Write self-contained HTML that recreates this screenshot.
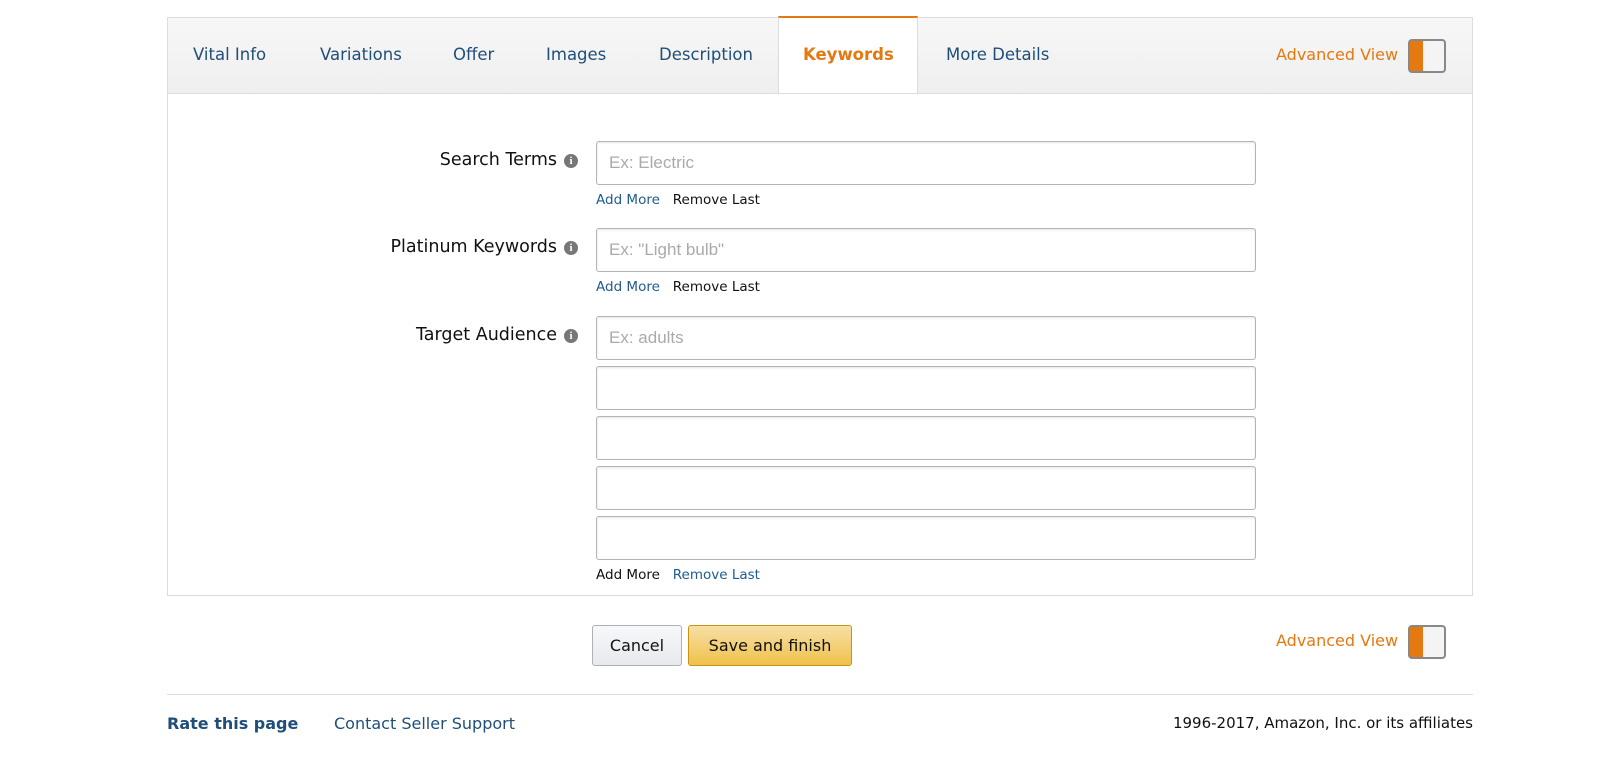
<!DOCTYPE html><html><head><style>
body{margin:0;background:#fff;font-family:"DejaVu Sans","Liberation Sans",sans-serif;color:#111;width:1612px;height:772px;position:relative;overflow:hidden}
.a{position:absolute}
.box{left:167px;top:17px;width:1304px;height:577px;border:1px solid #ddd}
.bar{left:168px;top:18px;width:1304px;height:75px;background:linear-gradient(#f7f7f7,#efefef);border-bottom:1px solid #ddd}
.tab{top:45px;font-size:16.5px;color:#1f4e79}
.kw{left:778px;top:16px;width:140px;height:77px;background:#fff;border-top:2px solid #e47911;border-left:1px solid #ddd;border-right:1px solid #ddd;box-sizing:border-box}
.lbl{font-size:17.5px;text-align:right;right:1034px}
.info{display:inline-block;width:14px;height:14px;border-radius:50%;background:#777;color:#fff;font-size:11px;line-height:14px;text-align:center;font-weight:bold;vertical-align:1px;margin-left:7px;font-family:"Liberation Serif",serif}
.in{left:596px;width:660px;height:44px;border:1px solid #b4b4b4;border-radius:3px;box-shadow:inset 0 1px 2px rgba(0,0,0,.1);box-sizing:border-box;font-family:"Liberation Sans",sans-serif;font-size:17px;color:#aaa;padding:11px 12px}
.sm{font-size:13.5px}
.blue{color:#1f5b8f}
.tog{width:38px;height:34px;border:2px solid #888;border-radius:4px;box-sizing:border-box;background:linear-gradient(90deg,#e47911 0 13px,#f4f4f4 13px)}
.av{font-size:16px;color:#e47911}
</style></head><body>
<div class="a box"></div>
<div class="a bar"></div>
<div class="a kw"></div>
<div class="a tab" style="left:193px">Vital Info</div>
<div class="a tab" style="left:320px">Variations</div>
<div class="a tab" style="left:453px">Offer</div>
<div class="a tab" style="left:546px">Images</div>
<div class="a tab" style="left:659px">Description</div>
<div class="a tab" style="left:803px;color:#e47911;font-weight:bold">Keywords</div>
<div class="a tab" style="left:946px">More Details</div>
<div class="a av" style="left:1276px;top:45px">Advanced View</div>
<div class="a tog" style="left:1408px;top:39px"></div>

<div class="a lbl" style="top:150px">Search Terms<span class="info">i</span></div>
<div class="a in" style="top:141px">Ex: Electric</div>
<div class="a sm" style="left:596px;top:192px"><span class="blue">Add More</span>&nbsp;&nbsp; Remove Last</div>
<div class="a lbl" style="top:237px">Platinum Keywords<span class="info">i</span></div>
<div class="a in" style="top:228px">Ex: "Light bulb"</div>
<div class="a sm" style="left:596px;top:279px"><span class="blue">Add More</span>&nbsp;&nbsp; Remove Last</div>
<div class="a lbl" style="top:325px">Target Audience<span class="info">i</span></div>
<div class="a in" style="top:316px">Ex: adults</div>
<div class="a in" style="top:366px"></div>
<div class="a in" style="top:416px"></div>
<div class="a in" style="top:466px"></div>
<div class="a in" style="top:516px"></div>
<div class="a sm" style="left:596px;top:567px">Add More&nbsp;&nbsp; <span class="blue">Remove Last</span></div>

<div class="a" style="left:592px;top:625px;width:90px;height:41px;box-sizing:border-box;border:1px solid #adb1b8;border-radius:3px;background:linear-gradient(#f7f8fa,#e7e9ec);font-size:16px;text-align:center;line-height:39px">Cancel</div>
<div class="a" style="left:688px;top:625px;width:164px;height:41px;box-sizing:border-box;border:1px solid #c89411;border-radius:3px;background:linear-gradient(#f7dfa5,#f0c14b);font-size:16px;text-align:center;line-height:39px">Save and finish</div>
<div class="a av" style="left:1276px;top:631px">Advanced View</div>
<div class="a tog" style="left:1408px;top:625px"></div>

<div class="a" style="left:167px;top:694px;width:1306px;height:1px;background:#ddd"></div>
<div class="a" style="left:167px;top:714px;font-size:16px;font-weight:bold;color:#1f4e79">Rate this page</div>
<div class="a" style="left:334px;top:714px;font-size:16px;color:#1f4e79">Contact Seller Support</div>
<div class="a" style="right:139px;top:714px;font-size:15px">1996-2017, Amazon, Inc. or its affiliates</div>
</body></html>
